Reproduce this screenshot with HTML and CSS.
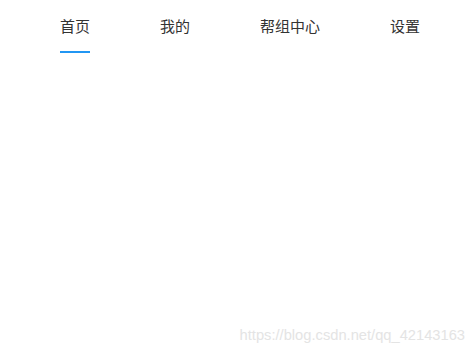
FILE: index.html
```html
<!DOCTYPE html>
<html lang="zh-CN">
<head>
<meta charset="utf-8">
<title>Tabs</title>
<link rel="stylesheet" href="styles.css">
</head>
<body>
<nav class="tabs">
  <div class="tab active">首页</div>
  <div class="tab">我的</div>
  <div class="tab">帮组中心</div>
  <div class="tab">设置</div>
</nav>
<div class="watermark">https://blog.csdn.net/qq_42143163</div>
</body>
</html>
```
FILE: styles.css
```css
html, body {
  margin: 0;
  padding: 0;
  background: #ffffff;
}
body {
  width: 474px;
  height: 353px;
  position: relative;
  overflow: hidden;
  font-family: "Noto Sans CJK SC", "Noto Sans", sans-serif;
}
.tabs {
  display: flex;
  gap: 70px;
  padding: 16px 0 0 60px;
}
.tab {
  font-size: 15px;
  line-height: 20px;
  color: #333333;
  padding-bottom: 15px;
  border-bottom: 2px solid transparent;
}
.tab.active {
  border-bottom-color: #2196f3;
}
.watermark {
  position: absolute;
  right: 9px;
  bottom: 9px;
  font-family: "Liberation Sans", Arial, sans-serif;
  font-size: 14.7px;
  line-height: 17px;
  color: #e4e4e4;
}
```
